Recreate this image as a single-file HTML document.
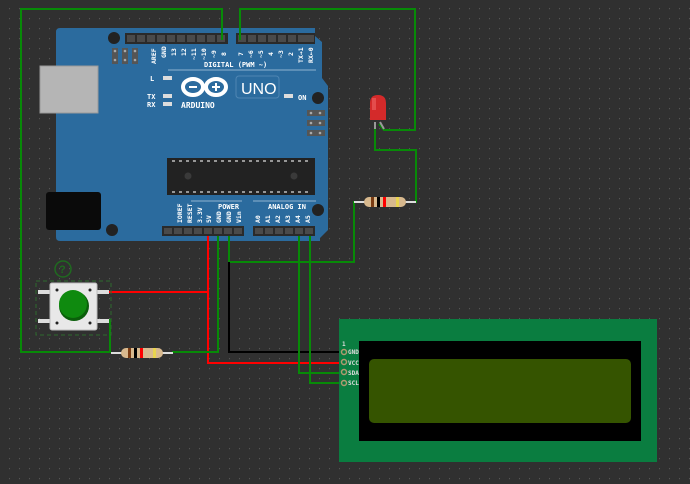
<!DOCTYPE html>
<html><head><style>
html,body{margin:0;padding:0;background:#303030;}
svg{display:block}
text{font-family:"DejaVu Sans Mono","Liberation Mono",monospace;font-weight:bold;}
</style></head><body>
<svg width="690" height="484" viewBox="0 0 690 484" xmlns="http://www.w3.org/2000/svg">
<defs>
<pattern id="dots" x="0" y="8" width="10" height="10" patternUnits="userSpaceOnUse">
<rect x="9.5" y="0" width="1.2" height="1.2" fill="#7a7a7a"/>
</pattern>
</defs>
<rect width="690" height="484" fill="#303030"/>
<rect width="690" height="484" fill="url(#dots)"/>

<!-- Arduino board -->
<path d="M60 28 H315 V36 L322 42 V78 L328 86 V230 L320 238 V241 H60 Q56 241 56 237 V32 Q56 28 60 28 Z" fill="#2b6b9e"/>
<circle cx="114" cy="38" r="6" fill="#222"/>
<circle cx="318" cy="98" r="6" fill="#222"/>
<circle cx="318" cy="210" r="6" fill="#222"/>
<circle cx="112" cy="230" r="6" fill="#222"/>
<!-- headers -->
<rect x="125" y="33" width="103" height="11" fill="#2a2a2a"/>
<rect x="236" y="33" width="79" height="11" fill="#2a2a2a"/>
<rect x="162" y="226" width="82" height="10" fill="#2a2a2a"/>
<rect x="253" y="226" width="62" height="10" fill="#2a2a2a"/>
<g fill="#4a4a4a">
<path d="M127 35h8v7h-8z M137 35h8v7h-8z M147 35h8v7h-8z M157 35h8v7h-8z M167 35h8v7h-8z M177 35h8v7h-8z M187 35h8v7h-8z M197 35h8v7h-8z M207 35h8v7h-8z M217 35h8v7h-8z"/>
<path d="M238 35h8v7h-8z M248 35h8v7h-8z M258 35h8v7h-8z M268 35h8v7h-8z M278 35h8v7h-8z M288 35h8v7h-8z M298 35h8v7h-8z M306 35h8v7h-8z"/>
<path d="M164 228h8v6h-8z M174 228h8v6h-8z M184 228h8v6h-8z M194 228h8v6h-8z M204 228h8v6h-8z M214 228h8v6h-8z M224 228h8v6h-8z M234 228h8v6h-8z"/>
<path d="M255 228h8v6h-8z M265 228h8v6h-8z M275 228h8v6h-8z M285 228h8v6h-8z M295 228h8v6h-8z M305 228h8v6h-8z"/>
</g>
<!-- ICSP -->
<g fill="#555"><rect x="112" y="48" width="6" height="16"/><rect x="122" y="48" width="6" height="16"/><rect x="132" y="48" width="6" height="16"/>
<rect x="307" y="110" width="18" height="6"/><rect x="307" y="120" width="18" height="6"/><rect x="307" y="130" width="18" height="6"/></g>
<g fill="#aaa"><circle cx="115" cy="51" r="1.3"/><circle cx="115" cy="60" r="1.3"/><circle cx="125" cy="51" r="1.3"/><circle cx="125" cy="60" r="1.3"/><circle cx="135" cy="51" r="1.3"/><circle cx="135" cy="60" r="1.3"/>
<circle cx="311" cy="113" r="1.3"/><circle cx="320" cy="113" r="1.3"/><circle cx="311" cy="123" r="1.3"/><circle cx="320" cy="123" r="1.3"/><circle cx="311" cy="133" r="1.3"/><circle cx="320" cy="133" r="1.3"/></g>
<!-- USB -->
<rect x="40" y="66" width="58" height="47" fill="#b5b5b5" stroke="#999"/>
<!-- power jack -->
<rect x="46" y="192" width="55" height="38" rx="3" fill="#0a0a0a"/>
<!-- chip -->
<rect x="167" y="158" width="148" height="37" fill="#222"/>
<circle cx="188" cy="176" r="3.5" fill="#3a3a3a"/><circle cx="294" cy="176" r="3.5" fill="#3a3a3a"/>
<path d="M172 161 H312 M172 192 H312" stroke="#ddd" stroke-width="1.2" stroke-dasharray="3 4"/>
<!-- labels -->
<g fill="#fff" font-size="7">
<text x="204" y="67">DIGITAL (PWM ~)</text>
<text x="268" y="209" font-size="7">ANALOG IN</text>
<text x="218" y="209" font-size="7">POWER</text>
<text x="150" y="81" font-size="7">L</text>
<text x="147" y="99" font-size="7">TX</text>
<text x="147" y="107" font-size="7">RX</text>
<text x="298" y="100" font-size="7">ON</text>
</g>
<g fill="#fff" font-size="6.5">
<g transform="rotate(-90)">
<text x="-64" y="156">AREF</text><text x="-58" y="166">GND</text><text x="-56" y="176">13</text><text x="-56" y="186">12</text><text x="-60" y="196">~11</text><text x="-60" y="206">~10</text><text x="-58" y="216">~9</text><text x="-56" y="226">8</text>
<text x="-56" y="243">7</text><text x="-58" y="253">~6</text><text x="-58" y="263">~5</text><text x="-56" y="273">4</text><text x="-58" y="283">~3</text><text x="-56" y="293">2</text><text x="-63" y="303">TX→1</text><text x="-63" y="313">RX←0</text>
<text x="-223" y="182">IOREF</text><text x="-223" y="192">RESET</text><text x="-223" y="202">3.3V</text><text x="-223" y="211">5V</text><text x="-223" y="221">GND</text><text x="-223" y="231">GND</text><text x="-223" y="241">Vin</text>
<text x="-223" y="260">A0</text><text x="-223" y="270">A1</text><text x="-223" y="280">A2</text><text x="-223" y="290">A3</text><text x="-223" y="300">A4</text><text x="-223" y="310">A5</text>
</g></g>
<path d="M168 70 H316" stroke="#8fb3d0" stroke-width="1"/>
<path d="M191 201 H242 M253 201 H316" stroke="#8fb3d0" stroke-width="1"/>
<!-- leds -->
<g fill="#ddd"><rect x="163" y="76" width="9" height="4"/><rect x="163" y="94" width="9" height="4"/><rect x="163" y="102" width="9" height="4"/><rect x="284" y="94" width="9" height="4"/></g>
<!-- logo -->
<g fill="none" stroke="#fff" stroke-width="4">
<ellipse cx="193" cy="87" rx="10" ry="8"/><ellipse cx="216" cy="87" rx="10" ry="8"/>
</g>
<path d="M189 87h8M212 87h8M216 83v8" stroke="#fff" stroke-width="2"/>
<text x="181" y="108" fill="#fff" font-size="8">ARDUINO</text>
<rect x="236" y="76" width="43" height="22" rx="3" fill="none" stroke="#4f86b3"/>
<text x="241" y="94" fill="#fff" font-size="16" style="font-family:'Liberation Sans',sans-serif;font-weight:normal">UNO</text>

<!-- wires -->
<g fill="none" stroke-width="2" stroke-linejoin="miter">
<path d="M222 40 V9 H21 V352 H110 V320 H102" stroke="#078a07"/>
<path d="M240 40 V9 H415 V130 H384 L379 124" stroke="#078a07"/>
<path d="M375 124 V150 H416 V202 H410" stroke="#078a07"/>
<path d="M356 202 H354 V262 H229 V236" stroke="#078a07"/>
<path d="M229 262 V352 H343" stroke="#000"/>
<path d="M208 236 V363 H343" stroke="#f00"/>
<path d="M106 292 H208" stroke="#f00"/>
<path d="M218 236 V352 H172" stroke="#078a07"/>
<path d="M299 236 V373 H343" stroke="#078a07"/>
<path d="M310 236 V383 H343" stroke="#078a07"/>
</g>

<!-- LED -->
<path d="M375 122 V129 M380 122 L384 129" stroke="#999" stroke-width="2"/>
<path d="M370 120 V103 Q370 95 378 95 Q386 95 386 103 V120 Z" fill="#d42a2a"/>
<rect x="372" y="98" width="4" height="12" fill="#e66" opacity="0.6"/>

<!-- resistor 1 -->
<path d="M354 202 H416" stroke="#ddd" stroke-width="2"/>
<rect x="364" y="197" width="42" height="10" rx="5" fill="#d8b98e"/>
<rect x="371" y="197" width="3" height="10" fill="#7a3b12"/><rect x="377" y="197" width="3" height="10" fill="#000"/><rect x="383" y="197" width="3" height="10" fill="#f00"/><rect x="396" y="197" width="3" height="10" fill="#e8d44e"/>
<!-- resistor 2 -->
<path d="M111 353 H173" stroke="#ddd" stroke-width="2"/>
<rect x="121" y="348" width="42" height="10" rx="5" fill="#d8b98e"/>
<rect x="128" y="348" width="3" height="10" fill="#7a3b12"/><rect x="134" y="348" width="3" height="10" fill="#000"/><rect x="140" y="348" width="3" height="10" fill="#f00"/><rect x="153" y="348" width="3" height="10" fill="#e8d44e"/>

<!-- button -->
<rect x="36" y="281" width="75" height="54" fill="none" stroke="#2e6a2e" stroke-dasharray="4 3"/>
<circle cx="63" cy="269" r="8" fill="none" stroke="#1f6a1f" stroke-width="1.5"/>
<text x="59" y="273" fill="#1f6a1f" font-size="11" style="font-family:'Liberation Sans',sans-serif">?</text>
<g fill="#ddd"><rect x="38" y="290" width="13" height="4"/><rect x="38" y="319" width="13" height="4"/><rect x="96" y="290" width="13" height="4"/><rect x="96" y="319" width="13" height="4"/></g>
<rect x="50" y="283" width="47" height="47" rx="2" fill="#e8e8e8" stroke="#bbb"/>
<g fill="#222"><circle cx="57" cy="290" r="1.5"/><circle cx="90" cy="290" r="1.5"/><circle cx="57" cy="323" r="1.5"/><circle cx="90" cy="323" r="1.5"/></g>
<circle cx="74" cy="306" r="15" fill="#0b5f0b"/>
<circle cx="73" cy="304" r="14" fill="#0f8a0f"/>

<!-- LCD -->
<rect x="339" y="319" width="318" height="143" fill="#0a7d40"/>
<rect x="359" y="341" width="282" height="100" fill="#000"/>
<rect x="369" y="359" width="262" height="64" rx="5" fill="#355400"/>
<g fill="#ddd" font-size="6">
<text x="342" y="346">1</text>
<text x="348" y="354">GND</text><text x="348" y="365">VCC</text><text x="348" y="375">SDA</text><text x="348" y="385">SCL</text>
</g>
<g fill="none" stroke="#b09a70" stroke-width="1.5">
<circle cx="344" cy="352" r="2.5"/><circle cx="344" cy="362" r="2.5"/><circle cx="344" cy="372" r="2.5"/><circle cx="344" cy="383" r="2.5"/>
</g>
</svg>
</body></html>
